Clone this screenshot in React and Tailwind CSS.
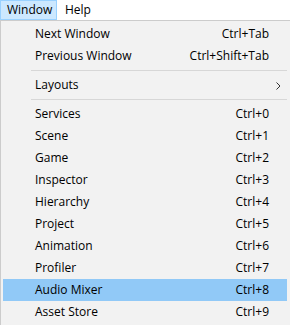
import React from "react";

const ITEMS = [
    { label: "Next Window", shortcut: "Ctrl+Tab" },
    { label: "Previous Window", shortcut: "Ctrl+Shift+Tab" },
    { sep: true },
    { label: "Layouts", submenu: true },
    { sep: true },
    { label: "Services", shortcut: "Ctrl+0" },
    { label: "Scene", shortcut: "Ctrl+1" },
    { label: "Game", shortcut: "Ctrl+2" },
    { label: "Inspector", shortcut: "Ctrl+3" },
    { label: "Hierarchy", shortcut: "Ctrl+4" },
    { label: "Project", shortcut: "Ctrl+5" },
    { label: "Animation", shortcut: "Ctrl+6" },
    { label: "Profiler", shortcut: "Ctrl+7" },
    { label: "Audio Mixer", shortcut: "Ctrl+8", active: true },
    { label: "Asset Store", shortcut: "Ctrl+9" }
];

const App = () => {
    return (
        <div className="w-[290px] h-[325px] overflow-hidden bg-white text-[12px] text-black font-['Open_Sans',sans-serif]">
            {/* menu bar */}
            <div className="flex h-[20px] items-stretch">
                <div className="flex items-center px-[6px] w-[57px] bg-[#cce8ff] border border-[#99d1ff]">Window</div>
                <div className="flex items-center pl-[8px]">Help</div>
            </div>

            {/* dropdown */}
            <div className="bg-[#f2f2f2] border-l border-t border-[#cccccc] pt-[2px] pl-[2px] pr-[3px] h-[305px]">
                {ITEMS.map((item, i) =>
                    item.sep ? (
                        <div key={i} className="h-[7px] flex items-center pl-[28px]">
                            <div className="h-px w-full bg-[#d7d7d7]" />
                        </div>
                    ) : (
                        <div
                            key={i}
                            className={`relative flex items-center h-[22px] pl-[32px] pr-[18px] ${item.active ? "bg-[#91c9f7]" : ""}`}
                        >
                            <span className="flex-1">{item.label}</span>
                            {item.shortcut && <span>{item.shortcut}</span>}
                            {item.submenu && (
                                <svg className="absolute right-[6px] top-[8px]" width="5" height="8" viewBox="0 0 5 8">
                                    <path d="M0.5 0.5 L4 4 L0.5 7.5" fill="none" stroke="#333" strokeWidth="1" />
                                </svg>
                            )}
                        </div>
                    )
                )}
            </div>
        </div>
    );
};

export default App;
